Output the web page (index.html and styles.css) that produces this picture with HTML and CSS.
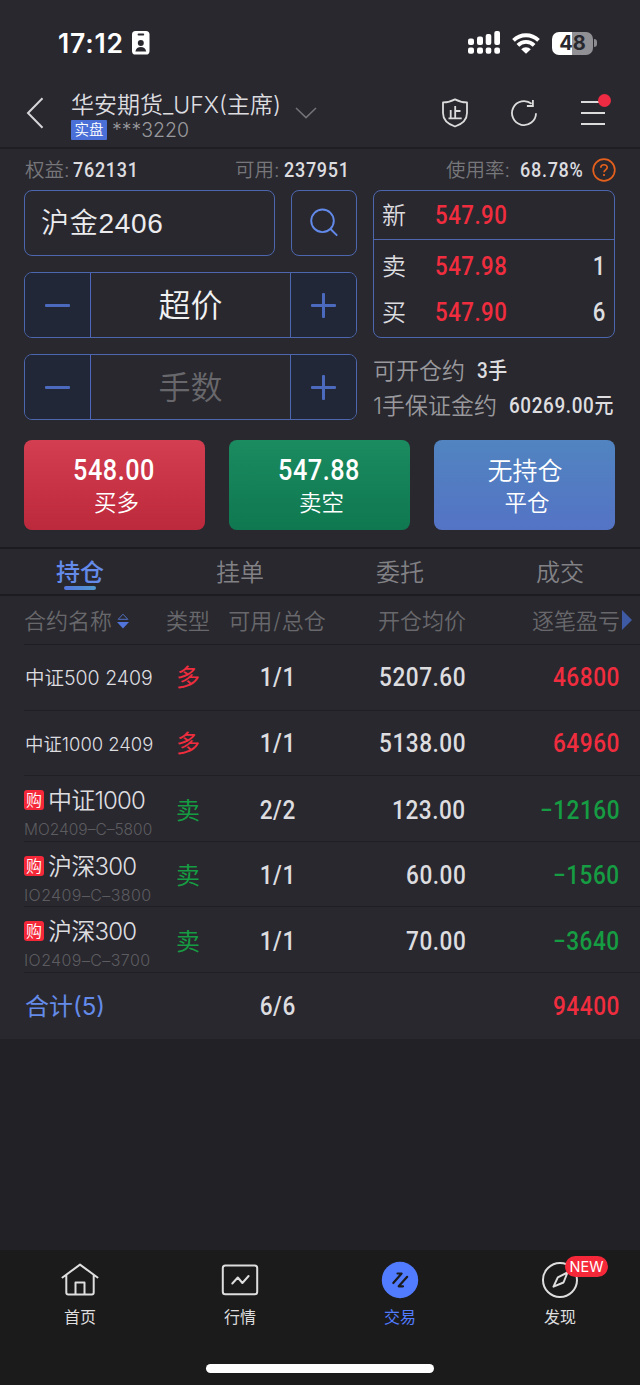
FILE: index.html
```html
<!DOCTYPE html>
<html lang="zh-CN">
<head>
<meta charset="utf-8">
<title>期货交易</title>
<link rel="stylesheet" href="styles.css">
</head>
<body>
<div class="app">
  <div class="status">
    <span class="clock">17:12</span>
    <svg class="idcard" width="18" height="24" viewBox="0 0 18 24"><rect width="17.5" height="23.5" rx="3.6" fill="#fff"/><rect x="5.6" y="2.6" width="6.6" height="1.8" rx=".9" fill="#29282e"/><circle cx="8.8" cy="12" r="3" fill="#29282e"/><path d="M3.400 20.600c.4-3.300 2.800-4.700 5.400-4.700s5 1.400 5.400 4.700z" fill="#29282e"/></svg>
    <svg class="signal" width="33" height="24" viewBox="0 0 33 24" fill="#fff"><rect x="0" y="7.500" width="6" height="6.500" rx="2"/><rect x="9" y="5.500" width="6" height="8.500" rx="2"/><rect x="17.700" y="3" width="5.600" height="11" rx="2"/><rect x="26.300" y="0" width="5.700" height="14" rx="2"/><rect x="0" y="16.600" width="6" height="6.200" rx="2"/><rect x="9" y="16.600" width="6" height="6.200" rx="2"/><rect x="17.700" y="16.600" width="5.600" height="6.200" rx="2"/><rect x="26.300" y="16.600" width="5.700" height="6.200" rx="2"/></svg>
    <svg class="wifi" width="28" height="21" viewBox="0 0 28 21" fill="none" stroke="#fff" stroke-width="3.800"><path d="M1.500 7.400a17.800 17.800 0 0 1 25 0"/><path d="M5.900 12.300a11.400 11.400 0 0 1 16.200 0"/><path d="M9.200 16.200a6.600 6.600 0 0 1 9.600 0L14 20.800z" fill="#fff" stroke="none"/></svg>
    <span class="battery"><span class="cell">48</span><span class="nub"></span></span>
  </div>

  <div class="header">
    <svg class="back" width="18" height="32" viewBox="0 0 18 32" fill="none" stroke="#d6d6d8" stroke-width="2"><path d="M16.500 1.300 2 16l14.500 14.700"/></svg>
    <div class="account">
      <div class="broker">华安期货_UFX(主席)</div>
      <div class="acct"><span class="live">实盘</span><span class="acctno">***3220</span></div>
    </div>
    <svg class="chev" width="22" height="12" viewBox="0 0 22 12" fill="none" stroke="#737378" stroke-width="1.500"><path d="m1 1 10 9.600L21 1"/></svg>
    <svg class="shield" width="28" height="30" viewBox="0 0 28 30" fill="none" stroke="#dcdcdc" stroke-width="1.800"><path d="M14 1.400c3.500 2 7.500 3 12 3V15c0 6.500-4.600 11-12 13.500C6.600 26 2 21.500 2 15V4.400c4.500 0 8.500-1 12-3z" stroke-linejoin="round"/><path d="M14.200 8v12M14.200 13h5.300M9.700 12v8M7.500 20.400h13.200"/></svg>
    <svg class="refresh" width="28" height="28" viewBox="0 0 28 28" fill="none" stroke="#dcdcdc" stroke-width="1.800"><path d="M26 14.200A12 12 0 1 1 21.600 4.800"/><path d="M22.900 1v6h-6"/></svg>
    <span class="menu"><i></i><i></i><i></i><b></b></span>
  </div>

  <div class="funds">
    <span class="fl">权益:</span><span class="num n1">762131</span>
    <span class="fl f2">可用:</span><span class="num n2">237951</span>
    <span class="fl f3">使用率:</span><span class="num n3">68.78%</span>
    <svg class="help" width="24" height="24" viewBox="0 0 24 24" fill="none" stroke="#e4601c" stroke-width="1.700"><circle cx="12" cy="12" r="10.800"/><path d="M8.800 9.800c0-4 6.400-4 6.400-.4 0 2.400-3.200 2.500-3.200 4.900"/><path d="M12 16v2"/></svg>
  </div>

  <div class="form">
    <div class="left">
      <div class="pick">
        <div class="box contract">沪金2406</div>
        <div class="box search"><svg width="28" height="30" viewBox="0 0 28 30" fill="none" stroke="#628aea" stroke-width="1.900"><circle cx="12.500" cy="12.800" r="11.300"/><path d="m20.500 21 6.700 6.700"/></svg></div>
      </div>
      <div class="box stepper"><span class="btn"><i class="bar"></i></span><span class="val">超价</span><span class="btn plus"><i class="bar"></i></span></div>
      <div class="box stepper"><span class="btn"><i class="bar"></i></span><span class="val hint">手数</span><span class="btn plus"><i class="bar"></i></span></div>
    </div>
    <div class="right">
      <div class="box quote">
        <div class="q last"><span>新</span><span class="num">547.90</span></div>
        <div class="q ask"><span>卖</span><span class="num">547.98</span><span class="num vol">1</span></div>
        <div class="q bid"><span>买</span><span class="num">547.90</span><span class="num vol">6</span></div>
      </div>
      <div class="margin m1"><span>可开仓约</span><span class="num mv">3手</span></div>
      <div class="margin"><span>1手保证金约</span><span class="num mv">60269.00元</span></div>
    </div>
  </div>

  <div class="orders">
    <div class="order buy"><span class="num">548.00</span><span class="act">买多</span></div>
    <div class="order sell"><span class="num">547.88</span><span class="act">卖空</span></div>
    <div class="order close"><span class="cn">无持仓</span><span class="act">平仓</span></div>
  </div>

  <div class="tabs"><span class="on">持仓</span><span>挂单</span><span>委托</span><span>成交</span></div>

  <div class="thead">
    <span class="sort">合约名称<svg width="12" height="16" viewBox="0 0 12 16"><path d="M1.200 6.300 6 1.200l4.800 5.100z" fill="none" stroke="#5070c4"/><path d="M0 9h12l-6 6.500z" fill="#5275dc"/></svg></span>
    <span class="c">类型</span><span class="c">可用<span class="slash">/</span>总仓</span><span class="r">开仓均价</span><span class="r">逐笔盈亏</span><i class="more"></i>
  </div>
  <div class="rows">
    <div class="row"><span class="name sm">中证500 2409</span><span class="c red">多</span><span class="c"><b class="num">1/1</b></span><span class="r"><b class="num">5207.60</b></span><span class="r red"><b class="num">46800</b></span></div>
    <div class="row"><span class="name sm xs">中证1000 2409</span><span class="c red">多</span><span class="c"><b class="num">1/1</b></span><span class="r"><b class="num">5138.00</b></span><span class="r red"><b class="num">64960</b></span></div>
    <div class="row"><span class="name opt"><span><em>购</em>中证1000</span><small>MO2409–C–5800</small></span><span class="c green">卖</span><span class="c"><b class="num">2/2</b></span><span class="r"><b class="num">123.00</b></span><span class="r green"><b class="num">−12160</b></span></div>
    <div class="row"><span class="name opt io"><span><em>购</em>沪深300</span><small>IO2409–C–3800</small></span><span class="c green">卖</span><span class="c"><b class="num">1/1</b></span><span class="r"><b class="num">60.00</b></span><span class="r green"><b class="num">−1560</b></span></div>
    <div class="row"><span class="name opt io"><span><em>购</em>沪深300</span><small>IO2409–C–3700</small></span><span class="c green">卖</span><span class="c"><b class="num">1/1</b></span><span class="r"><b class="num">70.00</b></span><span class="r green"><b class="num">−3640</b></span></div>
    <div class="row"><span class="name total">合计(5)</span><span></span><span class="c"><b class="num">6/6</b></span><span></span><span class="r red"><b class="num">94400</b></span></div>
  </div>

  <div class="blank"></div>

  <div class="nav">
    <div class="item"><svg width="40" height="40" viewBox="0 0 40 40" fill="none" stroke="#dedede" stroke-width="2"><path d="M2.500 16.500 20 3.600l17.500 12.900M6.300 14v17.500q0 2 2 2h23.400q2 0 2-2V14M15.500 33V21.500h9V33" stroke-linejoin="round" stroke-linecap="round"/></svg><span>首页</span></div>
    <div class="item"><svg width="40" height="40" viewBox="0 0 40 40" fill="none" stroke="#dedede" stroke-width="2"><rect x="2.800" y="4.600" width="34.400" height="28.600" rx="2.500"/><path d="m12.300 22.500 5.500-6 4.600 5.500 6.200-7" stroke-linecap="round" stroke-linejoin="round"/></svg><span>行情</span></div>
    <div class="item on"><svg width="40" height="40" viewBox="0 0 40 40"><circle cx="20" cy="19" r="18.200" fill="#517cff"/><path d="M13.300 22 21.600 12.500H17.500M27.200 15.800 18.700 25.300h4.300" fill="none" stroke="#1b1b1c" stroke-width="2.200" stroke-linecap="round" stroke-linejoin="round"/></svg><span>交易</span></div>
    <div class="item"><svg width="40" height="40" viewBox="0 0 40 40" fill="none" stroke="#dedede" stroke-width="2"><circle cx="20" cy="19" r="17"/><path d="M27.500 11.500 23.500 21.500l-10 4.200 4.300-9.400z" stroke-linejoin="round"/></svg><span>发现</span><b class="new">NEW</b></div>
  </div>
  <div class="home"><i></i></div>
</div>
</body>
</html>
```
FILE: styles.css
```css
* { box-sizing: border-box; }
body { margin: 0; background: #29282e; }
.app {
  width: 640px; height: 1385px; overflow: hidden;
  display: flex; flex-direction: column;
  color: #dddde0; font-weight: 350;
  font-family: Inter, "Noto Sans CJK SC", sans-serif;
}
.app > * { flex: none; }
.app svg { display: block; flex: none; }
.num {
  font-family: Roboto, "Noto Sans CJK SC", sans-serif; font-weight: 500;
  display: inline-block; white-space: nowrap;
  transform: scaleX(.87); transform-origin: left; letter-spacing: .6px;
}

/* status bar */
.status { height: 78px; padding: 8px 43px 0 58px; display: flex; align-items: center; }
.clock { width: 74px; font: 600 26.500px/30px Inter, sans-serif; color: #fff; letter-spacing: .8px; }
.signal { margin-left: 318px; }
.wifi { margin-left: 11px; }
.battery { margin-left: 12px; display: flex; align-items: center; gap: 1px; }
.cell {
  width: 41px; height: 23px; border-radius: 7px; text-align: center;
  font: 700 20px/23px Inter, sans-serif; color: #29282e;
  background: linear-gradient(90deg, #fff 48%, #919195 48%);
}
.nub { width: 3px; height: 8px; border-radius: 0 3px 3px 0; background: #8b8b90; }

/* account header */
.header { height: 71px; padding-left: 26px; display: flex; align-items: center; border-bottom: 2px solid #1f1e23; }
.account { width: 209px; margin-left: 27px; padding-top: 6px; }
.broker { font-size: 23px; line-height: 28px; white-space: nowrap; }
.acct { display: flex; align-items: center; height: 22px; }
.live { width: 36px; height: 20px; background: #4a70d8; border-radius: 1px; color: #fff; font-size: 14.500px; line-height: 20px; text-align: center; }
.acctno { font-size: 19.500px; line-height: 22px; color: #99999d; margin-left: 5px; }
.chev { margin-left: 15px; }
.shield { margin-left: 124px; }
.refresh { margin-left: 41px; }
.menu { position: relative; margin-left: 43px; width: 24px; display: flex; flex-direction: column; gap: 9px; }
.menu i { height: 2px; background: #dcdcdc; }
.menu b { position: absolute; left: 17px; top: -7px; width: 13px; height: 13px; border-radius: 50%; background: #ee2b42; }

/* funds */
.funds { height: 41px; padding: 0 0 0 25px; display: flex; align-items: center; font-size: 20.500px; line-height: 40px; }
.fl { color: #77777b; font-size: 19.500px; width: 48px; white-space: nowrap; }
.f3 { width: 74px; }
.n1 { width: 162px; }
.f2 { width: 49px; }
.n2 { width: 162px; }
.n3 { width: 75px; }
.funds .help { margin-left: -3px; }
.funds .num { letter-spacing: .8px; transform: scaleX(.88); }

/* order form */
.form { display: flex; gap: 16px; padding-left: 24px; height: 250px; }
.left { width: 333px; display: flex; flex-direction: column; gap: 16px; }
.pick { display: flex; gap: 16px; }
.box { border: 1px solid #4c67ae; border-radius: 8px; height: 66px; }
.contract { width: 251px; padding: 1px 0 0 16px; font-size: 28px; line-height: 64px; letter-spacing: .7px; color: #ececee; font-family: "Liberation Sans", "Noto Sans CJK SC", sans-serif; }
.search { width: 66px; display: grid; place-items: center; }
.stepper { display: flex; overflow: hidden; }
.btn { width: 66px; background: #212737; border-right: 1px solid #4c67b9; display: grid; place-items: center; }
.plus { border-right: 0; border-left: 1px solid #4c67ae; }
.bar { position: relative; width: 25px; height: 3px; border-radius: 1px; background: #4b69bd; }
.plus .bar::after { content: ""; position: absolute; left: 11px; top: -11px; width: 3px; height: 25px; border-radius: 1px; background: #4b69bd; }
.val { flex: 1; text-align: center; font-size: 32px; line-height: 66px; color: #f2f2f3; }
.hint { color: #68686c; }
.right { width: 242px; }
.quote { height: 148px; }
.q { display: flex; align-items: center; height: 42px; padding: 0 8px; font-size: 24px; line-height: 40px; }
.q > span:first-child { width: 53px; padding-top: 2px; }
.q .num { color: #f02d3f; width: 140px; font-size: 25.500px; }
.q .vol { width: 32px; flex: none; color: #dedee0; text-align: right; transform-origin: right; }
.last { height: 49px; border-bottom: 1px solid #4c67ae; }
.ask { height: 51px; }
.margin { display: flex; height: 35px; line-height: 35px; font-size: 23px; color: #99999d; white-space: nowrap; }
.m1 { margin-top: 16px; }
.mv { color: #dedee0; font-size: 21.500px; margin-left: 12px; }
.margin .mv { transform: scaleX(.88); letter-spacing: .7px; line-height: 34px; }

/* order buttons */
.orders { display: flex; gap: 24px; padding: 0 0 17px 24px; }
.order { width: 181px; height: 90px; border-radius: 8px; display: flex; flex-direction: column; align-items: center; padding-top: 14px; color: #fff; font-size: 22.500px; line-height: 32px; }
.order .num { font-size: 29px; transform-origin: center; }
.order .cn { font-size: 25px; line-height: 34px; margin-right: 2px; }
.act { padding: 1px 0 0 4px; }
.order .cn + .act { padding: 0 0 0 2px; margin-top: -1px; }
.buy { background: linear-gradient(#d33e50, #bd293c); }
.sell { background: linear-gradient(#1b8b60, #0f7850); }
.close { background: linear-gradient(#5184c0, #5473c5); padding-left: 3px; }

/* tabs */
.tabs { height: 49px; border: solid #1c1b20; border-width: 2px 0; display: grid; grid-template-columns: repeat(4, 160px); text-align: center; font-size: 24px; line-height: 48px; color: #828286; }
.tabs .on { position: relative; color: #648bea; font-weight: 500; }
.tabs .on::after { content: ""; position: absolute; left: 64px; top: 37px; width: 32px; height: 4px; border-radius: 2px; background: linear-gradient(90deg, #5576df, #519ace); }

/* positions */
.thead, .row { display: grid; grid-template-columns: 140px 48px 130px 124px 154px; margin-left: 24px; align-items: center; }
.thead { position: relative; height: 49px; padding-top: 2px; font-size: 22px; color: #68686c; line-height: 46px; border-bottom: 1px solid #1e1d22; }
.slash { margin: 0 1px; }
.sort { display: flex; align-items: center; gap: 5px; white-space: nowrap; }
.more { position: absolute; left: 598px; top: 14px; border: solid transparent; border-width: 10px 0 10px 10px; border-left-color: #3f5aa5; }
.c { text-align: center; }
.r { text-align: right; }
.row { height: 65.600px; padding-top: 2px; border-bottom: 1px solid #201f24; font-size: 24px; line-height: 40px; }
.row:last-child { border-bottom: 0; }
.row .num { font-size: 26px; margin-top: -1px; }
.c .num { transform-origin: center; margin-left: 2px; }
.r .num { transform-origin: right; }
.name { white-space: nowrap; padding-left: 1px; }
.sm { font-size: 19.500px; }
.xs { font-size: 18.400px; }
.opt { display: flex; flex-direction: column; padding: 3px 0 0; font-size: 24px; line-height: 30px; letter-spacing: -.8px; }
.opt > span { display: flex; align-items: center; margin-top: 5px; }
.opt em { width: 20px; height: 20px; margin: -2px 4px 0 0; border-radius: 3px; background: #f5283a; color: #fff; font-style: normal; font-size: 16px; line-height: 20px; text-align: center; letter-spacing: 0; }
.opt small { font-size: 15.500px; line-height: 27px; color: #5c5c60; letter-spacing: 0; }
.io small { font-size: 16px; letter-spacing: .4px; }
.total { color: #648bea; font-weight: 400; }
.red { color: #f02d3f; }
.green { color: #169c42; }
.c.red, .c.green { font-weight: 400; }
.blank { height: 211px; background: #222126; }

/* bottom navigation */
.nav { height: 92px; padding-top: 11px; display: grid; grid-template-columns: repeat(4, 160px); background: #1b1b1c; }
.item { position: relative; display: flex; flex-direction: column; align-items: center; font-size: 16px; line-height: 24px; font-weight: 400; color: #dedede; }
.item span { margin-top: 4px; }
.item.on { color: #517cff; }
.new { position: absolute; left: 85px; top: -5px; width: 43px; height: 21px; border-radius: 11px; background: #f5283a; color: #fff; text-align: center; font: 400 14.500px/22px Inter, sans-serif; }
.home { flex: 1 0 auto; padding-top: 22px; background: #1b1b1c; }
.home i { display: block; width: 228px; height: 9px; margin: 0 auto; border-radius: 5px; background: #fff; }
```
